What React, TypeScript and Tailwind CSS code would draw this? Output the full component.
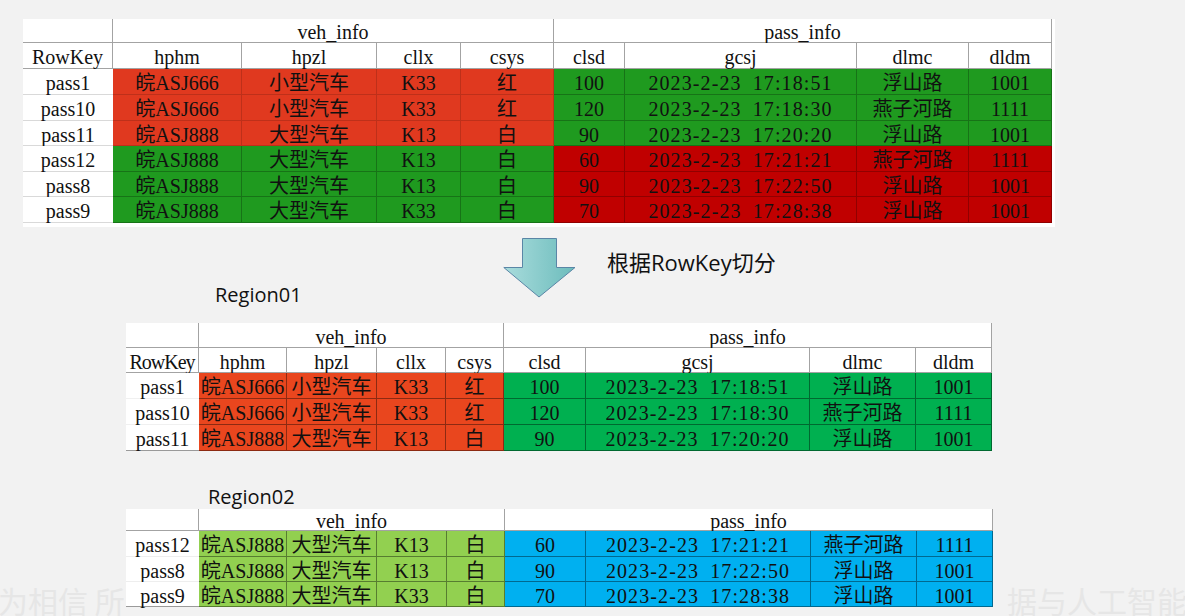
import React from "react";

type Row = string[];

const rows: Row[] = [
  ["pass1", "皖ASJ666", "小型汽车", "K33", "红", "100", "2023-2-23 17:18:51", "浮山路", "1001"],
  ["pass10", "皖ASJ666", "小型汽车", "K33", "红", "120", "2023-2-23 17:18:30", "燕子河路", "1111"],
  ["pass11", "皖ASJ888", "大型汽车", "K13", "白", "90", "2023-2-23 17:20:20", "浮山路", "1001"],
  ["pass12", "皖ASJ888", "大型汽车", "K13", "白", "60", "2023-2-23 17:21:21", "燕子河路", "1111"],
  ["pass8", "皖ASJ888", "大型汽车", "K13", "白", "90", "2023-2-23 17:22:50", "浮山路", "1001"],
  ["pass9", "皖ASJ888", "大型汽车", "K33", "白", "70", "2023-2-23 17:28:38", "浮山路", "1001"],
];

const headers = ["RowKey", "hphm", "hpzl", "cllx", "csys", "clsd", "gcsj", "dlmc", "dldm"];

function Cell({ children, cls }: { children?: React.ReactNode; cls: string }) {
  return (
    <div className={"flex items-center justify-center whitespace-nowrap leading-none pt-[3px] " + cls}>
      {children}
    </div>
  );
}

function fmt(s: string) {
  return s.replace(" ", "\u2002");
}

function DataRows({
  data,
  keyCls,
  vehCls,
  passCls,
}: {
  data: Row[];
  keyCls: string;
  vehCls: string;
  passCls: string;
}) {
  return (
    <>
      {data.map((r) => (
        <React.Fragment key={r[0]}>
          <Cell cls={keyCls}>{r[0]}</Cell>
          {r.slice(1, 5).map((c, j) => (
            <Cell key={"v" + j} cls={vehCls}>
              {c}
            </Cell>
          ))}
          {r.slice(5).map((c, j) => (
            <Cell key={"p" + j} cls={passCls + (j === 1 ? " tracking-[1.1px]" : "")}>
              {fmt(c)}
            </Cell>
          ))}
        </React.Fragment>
      ))}
    </>
  );
}

const HDR = "border-r border-b border-[#a3a3a3] bg-white";

export default function App() {
  return (
    <div className="relative w-[1185px] h-[616px] overflow-hidden bg-[#f2f2f2] text-[#111] [font-family:'Liberation_Serif','Noto_Sans_CJK_SC',serif]">
      {/* watermark */}
      <div className="absolute left-[-32px] top-[585px] z-0 text-[30px] leading-[30px] text-[#e6e6e6] whitespace-nowrap [font-family:'Noto_Sans_CJK_SC',sans-serif]">
        因为相信 所
      </div>
      <div className="absolute right-[-2px] top-[585px] z-0 text-[30px] leading-[30px] text-[#e6e6e6] whitespace-nowrap [font-family:'Noto_Sans_CJK_SC',sans-serif]">
        据与人工智能
      </div>

      <div className="relative z-10 flex flex-col pt-[19px]">
        {/* top table */}
        <div className="ml-[23px] self-start bg-white pr-[3px] pb-[4px]">
          <div className="grid grid-cols-[90px_129px_135px_84px_93px_71px_232px_112px_83px] grid-rows-[24px_26px_26px_26px_25px_26px_25px_26px] text-[20px]">
            <Cell cls={HDR} />
            <Cell cls={"col-span-4 " + HDR}>veh_info</Cell>
            <Cell cls={"col-span-4 " + HDR}>pass_info</Cell>
            {headers.map((h) => (
              <Cell key={h} cls={HDR}>
                {h}
              </Cell>
            ))}
            <DataRows
              data={rows.slice(0, 3)}
              keyCls="bg-white border-b border-[#d9d9d9]"
              vehCls="bg-[#e0391f] border-r border-b border-black/15"
              passCls="bg-[#1f9a1f] border-r border-b border-black/25"
            />
            <DataRows
              data={rows.slice(3)}
              keyCls="bg-white border-b border-[#d9d9d9]"
              vehCls="bg-[#1f9a1f] border-r border-b border-black/25"
              passCls="bg-[#c00000] border-r border-b border-black/25"
            />
          </div>
        </div>

        {/* arrow + labels */}
        <div className="flex h-[96px]">
          <div className="w-[503px] pl-[215px] pt-[54px] text-[20px] leading-[28px] text-[#111] [font-family:'Open_Sans','Noto_Sans_CJK_SC',sans-serif]">
            Region01
          </div>
          <svg className="mt-[11px]" width="73" height="60" viewBox="0 0 73 60">
            <defs>
              <linearGradient id="ag" x1="0" y1="0" x2="1" y2="0">
                <stop offset="0" stopColor="#a9dcdc" />
                <stop offset="1" stopColor="#6cbcbc" />
              </linearGradient>
            </defs>
            <path
              d="M19.5 0.5 H53.5 V29.5 H72 L36 59 L0.8 29.5 H19.5 Z"
              fill="url(#ag)"
              stroke="#5a86a6"
              strokeWidth="1"
            />
          </svg>
          <div className="ml-[31px] pt-[20px] text-[22px] leading-[30px] text-[#111] [font-family:'Open_Sans','Noto_Sans_CJK_SC',sans-serif]">
            根据RowKey切分
          </div>
        </div>

        {/* Region01 table */}
        <div className="ml-[126px] self-start">
          <div className="grid grid-cols-[73px_88px_90px_69px_58px_82px_224px_106px_76px] grid-rows-[25px_25px_26px_26px_26px] text-[20px]">
            <Cell cls={HDR} />
            <Cell cls={"col-span-4 " + HDR}>veh_info</Cell>
            <Cell cls={"col-span-4 " + HDR}>pass_info</Cell>
            {headers.map((h) => (
              <Cell key={h} cls={HDR + (h === "RowKey" ? " tracking-[-1px]" : "")}>
                {h}
              </Cell>
            ))}
            <DataRows
              data={rows.slice(0, 2)}
              keyCls="bg-white border-b border-[#f0f0f0]"
              vehCls="bg-[#e9461e] border-r border-b border-black/40"
              passCls="bg-[#00b050] border-r border-b border-black/40"
            />
            <DataRows
              data={rows.slice(2, 3)}
              keyCls="bg-white border-b border-[#9a9a9a]"
              vehCls="bg-[#e9461e] border-r border-b border-black/40"
              passCls="bg-[#00b050] border-r border-b border-black/40"
            />
          </div>
        </div>

        <div className="mt-[33px] ml-[208px] h-[25px] text-[20px] leading-[25px] text-[#111] [font-family:'Open_Sans','Noto_Sans_CJK_SC',sans-serif]">
          Region02
        </div>

        {/* Region02 table */}
        <div className="ml-[126px] self-start">
          <div className="grid grid-cols-[73px_88px_90px_70px_58px_81px_225px_106px_76px] grid-rows-[22px_26px_25px_25px] text-[20px]">
            <Cell cls={HDR} />
            <Cell cls={"col-span-4 " + HDR}>veh_info</Cell>
            <Cell cls={"col-span-4 " + HDR}>pass_info</Cell>
            <DataRows
              data={rows.slice(3, 5)}
              keyCls="bg-white border-b border-[#eeeeee]"
              vehCls="bg-[#92d050] border-r border-b border-black/40"
              passCls="bg-[#00b0f0] border-r border-b border-black/40"
            />
            <DataRows
              data={rows.slice(5)}
              keyCls="bg-white border-b border-[#9a9a9a]"
              vehCls="bg-[#92d050] border-r border-b border-black/40"
              passCls="bg-[#00b0f0] border-r border-b border-black/40"
            />
          </div>
        </div>
      </div>
    </div>
  );
}
